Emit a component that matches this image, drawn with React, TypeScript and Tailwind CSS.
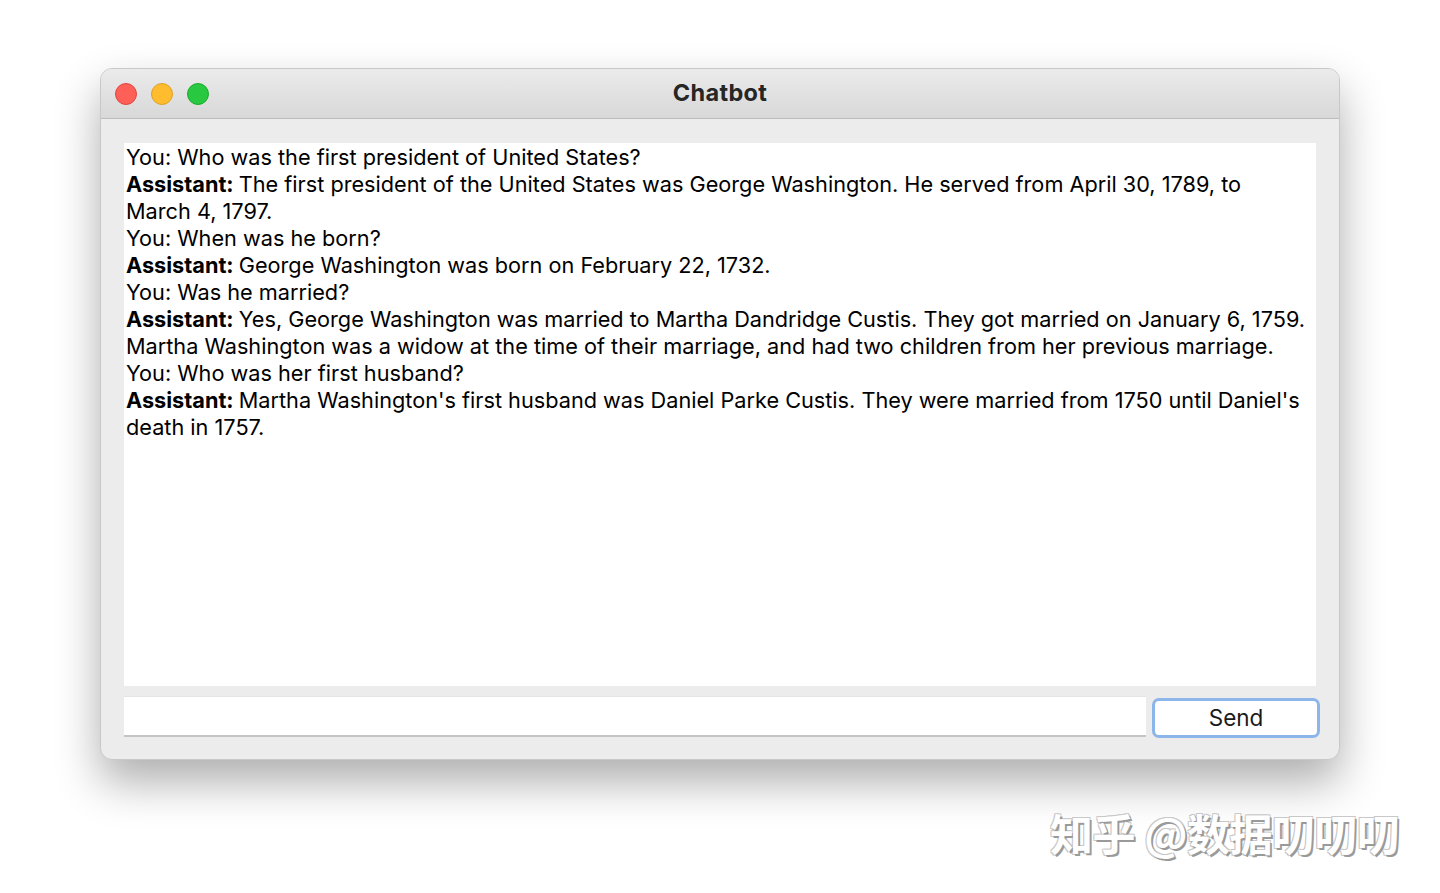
const lines: { who: "You" | "Assistant" | null; text: string }[] = [
  { who: "You", text: "Who was the first president of United States?" },
  { who: "Assistant", text: "The first president of the United States was George Washington. He served from April 30, 1789, to" },
  { who: null, text: "March 4, 1797." },
  { who: "You", text: "When was he born?" },
  { who: "Assistant", text: "George Washington was born on February 22, 1732." },
  { who: "You", text: "Was he married?" },
  { who: "Assistant", text: "Yes, George Washington was married to Martha Dandridge Custis. They got married on January 6, 1759." },
  { who: null, text: "Martha Washington was a widow at the time of their marriage, and had two children from her previous marriage." },
  { who: "You", text: "Who was her first husband?" },
  { who: "Assistant", text: "Martha Washington's first husband was Daniel Parke Custis. They were married from 1750 until Daniel's" },
  { who: null, text: "death in 1757." },
];

export default function App() {
  return (
    <div
      className="relative w-[1440px] h-[893px] bg-white overflow-hidden"
      style={{ fontFamily: "Inter, 'Liberation Sans', sans-serif" }}
    >
      <div className="pt-[68px] pl-[100px]">
        {/* Window */}
        <div className="w-[1240px] h-[692px] rounded-[12px] bg-[#ececec] border border-[#c8c8c8] shadow-[0_22px_45px_rgba(0,0,0,0.32)] overflow-hidden flex flex-col">
          {/* Title bar */}
          <div className="relative h-[50px] shrink-0 bg-gradient-to-b from-[#ebebeb] to-[#d8d8d8] border-b border-[#bdbdbd] flex items-center justify-center">
            <div className="absolute left-[14px] top-[14px] flex gap-[14px]">
              <span className="w-[22px] h-[22px] rounded-full bg-[#fe5f57] border border-[#e0443e]" />
              <span className="w-[22px] h-[22px] rounded-full bg-[#febc2e] border border-[#dea123]" />
              <span className="w-[22px] h-[22px] rounded-full bg-[#28c840] border border-[#1aab29]" />
            </div>
            <span className="text-[23.5px] font-bold text-[#262626] tracking-[0.3px] -mt-[2px]">Chatbot</span>
          </div>

          {/* Body */}
          <div className="flex-1 flex flex-col pt-[24px] pl-[23px] pr-[19px] pb-[21px]">
            <div className="h-[543px] w-[1192px] bg-white pl-[2px] pt-[1px] text-[21.7px] leading-[27px] text-black">
              {lines.map((l, i) => (
                <div key={i} className="whitespace-nowrap">
                  {l.who === "Assistant" && <span className="font-bold">Assistant: </span>}
                  {l.who === "You" && <span>You: </span>}
                  {l.text}
                </div>
              ))}
            </div>
            <div className="mt-[10px] flex items-start gap-[6px]">
              <div className="w-[1023px] h-[41px] bg-white border-b-2 border-[#c4c4c4] border-t border-t-[#e4e4e4]" />
              <button className="mt-[2px] w-[168px] h-[40px] rounded-[7px] bg-white border-[3px] border-[#8cb6ea] text-[22.5px] text-[#1a1a1a] leading-none">
                Send
              </button>
            </div>
          </div>
        </div>
      </div>

      {/* Watermark */}
      <div
        className="absolute left-[1050px] top-[800px] text-[43px] text-white font-bold tracking-[-0.5px]"
        style={{
          fontFamily: "'Noto Sans CJK SC', sans-serif",
          textShadow: "2px 2px 0 #9a9a9a, -1px -1px 0 #c8c8c8, 1px -1px 0 #c8c8c8, -1px 1px 0 #c8c8c8",
        }}
      >
        知乎 @数据叨叨叨
      </div>
    </div>
  );
}
